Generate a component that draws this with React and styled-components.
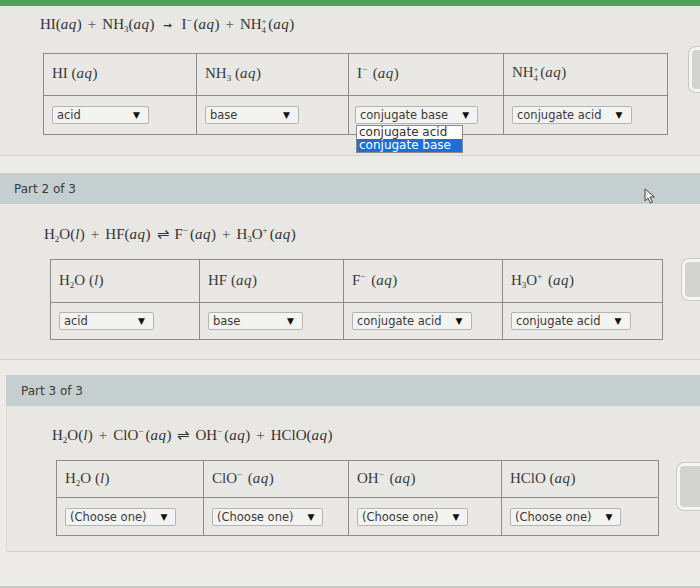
import React from 'react';
import styled, { createGlobalStyle } from 'styled-components';

const GlobalStyle = createGlobalStyle`
  html, body {
    margin: 0;
    padding: 0;
    background: #ecebe7;
    overflow: hidden;
  }
  * { box-sizing: border-box; }
`;

const Page = styled.div`
  width: 700px;
  height: 588px;
  overflow: hidden;
  background: #ecebe7;
  font-family: 'DejaVu Sans', Verdana, sans-serif;
  color: #333;
`;

const TopBar = styled.div`
  height: 6px;
  background: #52a05b;
`;

const PartHeader = styled.div`
  position: relative;
  height: 31px;
  margin-left: ${p => p.$indent || 0}px;
  padding-left: ${p => p.$pad}px;
  display: flex;
  align-items: center;
  background: #c6cfd0;
  font-size: 12px;
  color: #3a3a3a;
`;

const PartBody = styled.div`
  margin-left: ${p => p.$indent || 0}px;
  padding: ${p => p.$top}px 0 ${p => p.$bottom}px ${p => p.$left}px;
  background: #e8e7e3;
  border-bottom: 1px solid #d3d2cf;
  border-left: ${p => (p.$indent ? '1px solid #dcdbd8' : 'none')};
  margin-bottom: ${p => p.$gap || 0}px;
`;

const Equation = styled.div`
  font-family: 'Liberation Serif', 'Times New Roman', serif;
  font-size: 15px;
  line-height: 20px;
  height: 20px;
  color: #333;
  white-space: nowrap;
  margin-bottom: ${p => p.$gap}px;
`;

const Ital = styled.i`
  font-style: italic;
  letter-spacing: 0.5px;
`;

const Sub = styled.sub`
  font-size: 9px;
  line-height: 0;
  vertical-align: -3px;
`;

const Sup = styled.sup`
  font-size: 9px;
  line-height: 0;
  vertical-align: 6px;
  margin-right: 2px;
`;

const Stack = styled.span`
  display: inline-flex;
  flex-direction: column;
  align-items: flex-start;
  font-size: 8px;
  line-height: 9px;
  vertical-align: 5px;
  margin-right: 2px;
`;

const Op = styled.span`
  color: #555;
  margin: 0 6px;
`;

const Arrow = styled.span`
  font-size: ${p => p.$size || 11}px;
  margin: ${p => (p.$wide ? '0 9px 0 9px' : '0 5px 0 6px')};
`;

const Row = styled.div`
  display: flex;
  align-items: flex-start;
`;

const Table = styled.div`
  display: grid;
  grid-template-columns: ${p => p.$cols};
  grid-template-rows: ${p => p.$rows};
  margin-left: ${p => p.$shift || 0}px;
  border-top: 1px solid #8c8c8a;
  border-left: 1px solid #8c8c8a;
  background: #e9e8e4;
`;

const Cell = styled.div`
  position: relative;
  display: flex;
  align-items: center;
  padding-left: ${p => p.$pad || 8}px;
  border-right: 1px solid #8c8c8a;
  border-bottom: 1px solid #8c8c8a;
`;

const HeadCell = styled(Cell)`
  font-family: 'Liberation Serif', 'Times New Roman', serif;
  font-size: 15px;
  color: #3a3a3a;
  padding-bottom: 2px;
  white-space: nowrap;
`;

const Select = styled.div`
  display: flex;
  align-items: center;
  justify-content: space-between;
  gap: 14px;
  min-width: ${p => p.$w || 95}px;
  height: 18px;
  padding: 0 8px 0 4px;
  background: #f3f3f2;
  border: 1px solid #b4b4b2;
  border-radius: 2px;
  font-size: 11.5px;
  color: #3a3a3a;
  white-space: nowrap;
`;

const Caret = styled.span`
  font-size: 9px;
  color: #111;
`;

const OptionList = styled.div`
  position: absolute;
  left: 7px;
  top: 29px;
  width: 107px;
  background: #fdfdfd;
  border: 1px solid #8a8a8a;
  font-size: 12px;
  line-height: 13px;
  z-index: 2;
`;

const Option = styled.div`
  padding-left: 2px;
  color: ${p => (p.$active ? '#fff' : '#333')};
  background: ${p => (p.$active ? '#1d6fd8' : 'transparent')};
`;

const SideButton = styled.div`
  flex: none;
  width: 40px;
  height: ${p => p.$h}px;
  margin-top: ${p => p.$top}px;
  margin-left: ${p => p.$gap}px;
  background: #d3d3d1;
  border: 3px solid #f5f5f3;
  border-radius: 7px;
  box-shadow: 0 0 0 1px #c9c9c7;
`;

const Cursor = styled.svg`
  position: absolute;
  left: 644px;
  top: 15px;
`;

const Footer = styled.div`
  height: 6px;
  margin-top: ${p => p.$top}px;
  border-top: 2px solid #c7c9c8;
  background: #dfe3e3;
`;

const Aq = () => (
  <>
    (<Ital>aq</Ital>)
  </>
);

const Water = ({ space }) => (
  <>
    H<Sub>2</Sub>O{space ? ' ' : ''}(<Ital>l</Ital>)
  </>
);

const Ammonium = () => (
  <>
    NH
    <Stack>
      <span>+</span>
      <span>4</span>
    </Stack>
    <Aq />
  </>
);

const Head = ({ children }) => (
  <HeadCell>
    <span>{children}</span>
  </HeadCell>
);

const Choice = ({ text, w, pad, children }) => (
  <Cell $pad={pad}>
    <Select $w={w}>
      <span>{text}</span>
      <Caret>▼</Caret>
    </Select>
    {children}
  </Cell>
);

export default function App() {
  return (
    <Page>
      <GlobalStyle />
      <TopBar />

      <PartBody $top={8} $bottom={20} $left={40} $gap={17}>
        <Equation $gap={19}>
          HI<Aq /><Op>+</Op>NH<Sub>3</Sub><Aq />
          <Arrow $wide>➞</Arrow>I<Sup>−</Sup><Aq /><Op>+</Op><Ammonium />
        </Equation>
        <Row>
          <Table $cols="153px 152px 155px 164px" $rows="42px 39px" $shift={3}>
            <Head>HI <Aq /></Head>
            <Head>NH<Sub>3</Sub> <Aq /></Head>
            <Head>I<Sup>−</Sup> <Aq /></Head>
            <Head><Ammonium /></Head>
            <Choice text="acid" w={97} />
            <Choice text="base" w={94} />
            <Choice text="conjugate base" w={107} pad={6}>
              <OptionList>
                <Option>conjugate acid</Option>
                <Option $active>conjugate base</Option>
              </OptionList>
            </Choice>
            <Choice text="conjugate acid" w={112} />
          </Table>
          <SideButton $top={-6} $h={45} $gap={21} />
        </Row>
      </PartBody>

      <PartHeader $pad={14}>
        Part 2 of 3
        <Cursor width="12" height="16" viewBox="0 0 12 16">
          <path
            d="M1 1 L1 13 L4 10 L6.5 15 L8.5 14 L6 9 L10.5 9 Z"
            fill="#f4f4f4"
            stroke="#444"
            strokeWidth="1"
            strokeLinejoin="round"
          />
        </Cursor>
      </PartHeader>
      <PartBody $top={20} $bottom={19} $left={44} $gap={15}>
        <Equation $gap={15}>
          <Water /><Op>+</Op>HF<Aq /><Arrow $size={15}>⇌</Arrow>F<Sup>−</Sup><Aq />
          <Op>+</Op>H<Sub>3</Sub>O<Sup>+</Sup><Aq />
        </Equation>
        <Row>
          <Table $cols="149px 144px 159px 160px" $rows="43px 37px" $shift={6}>
            <Head><Water space /></Head>
            <Head>HF <Aq /></Head>
            <Head>F<Sup>−</Sup> <Aq /></Head>
            <Head>H<Sub>3</Sub>O<Sup>+</Sup> <Aq /></Head>
            <Choice text="acid" w={95} />
            <Choice text="base" w={95} />
            <Choice text="conjugate acid" w={104} />
            <Choice text="conjugate acid" w={107} />
          </Table>
          <SideButton $top={0} $h={41} $gap={19} />
        </Row>
      </PartBody>

      <PartHeader $pad={15} $indent={6}>
        Part 3 of 3
      </PartHeader>
      <PartBody $indent={6} $top={19} $bottom={15} $left={45}>
        <Equation $gap={15}>
          <Water /><Op>+</Op>ClO<Sup>−</Sup><Aq /><Arrow $size={15}>⇌</Arrow>OH<Sup>−</Sup>
          <Aq /><Op>+</Op>HClO<Aq />
        </Equation>
        <Row>
          <Table $cols="147px 145px 153px 157px" $rows="37px 38px" $shift={4}>
            <Head><Water space /></Head>
            <Head>ClO<Sup>−</Sup> <Aq /></Head>
            <Head>OH<Sup>−</Sup> <Aq /></Head>
            <Head>HClO <Aq /></Head>
            <Choice text="(Choose one)" w={93} />
            <Choice text="(Choose one)" w={94} />
            <Choice text="(Choose one)" w={103} />
            <Choice text="(Choose one)" w={105} />
          </Table>
          <SideButton $top={3} $h={47} $gap={18} />
        </Row>
      </PartBody>
      <Footer $top={34} />
    </Page>
  );
}
